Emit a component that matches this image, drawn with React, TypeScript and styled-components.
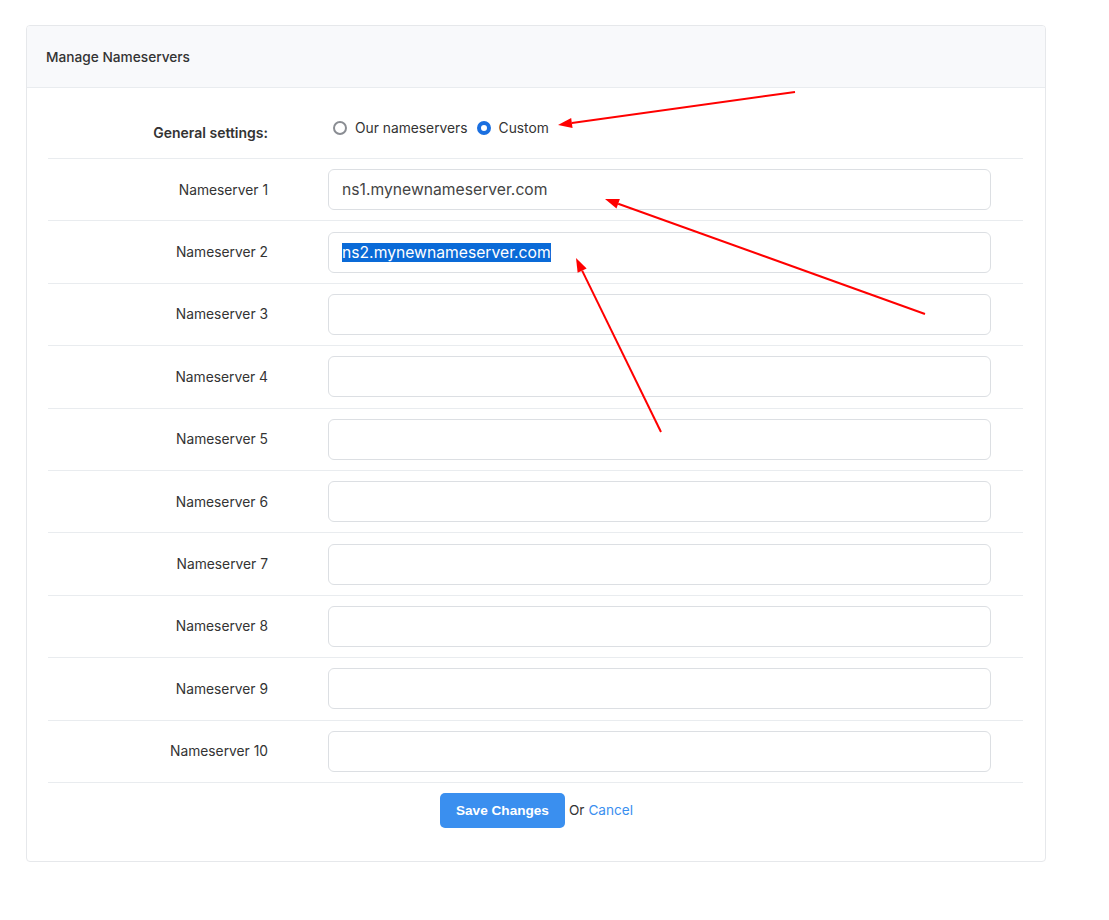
import React from 'react';
import styled, { createGlobalStyle } from 'styled-components';

const GlobalStyle = createGlobalStyle`
  html, body {
    margin: 0;
    background: #fff;
  }
  body {
    font-family: Inter, 'Noto Sans', sans-serif;
    color: #333;
  }
`;

const Page = styled.div`
  position: relative;
  padding: 25px 26px;
  min-height: 920px;
  box-sizing: border-box;
`;

const Card = styled.div`
  width: 1020px;
  border: 1px solid #e6e8eb;
  border-radius: 4px;
  box-sizing: border-box;
  overflow: hidden;
`;

const CardHeader = styled.div`
  height: 61px;
  display: flex;
  align-items: center;
  padding: 0 19px;
  background: #f8f9fb;
  border-bottom: 1px solid #e9ecef;
  font-size: 13.7px;
  font-weight: 500;
  color: #333;
`;

const CardBody = styled.div`
  padding: 0 22px 33px 21px;
`;

const Row = styled.div<{ $first?: boolean }>`
  display: grid;
  grid-template-columns: 220px 663px;
  column-gap: 60px;
  align-items: center;
  height: ${(p) => (p.$first ? '71px' : '62.4px')};
  padding-top: ${(p) => (p.$first ? '18px' : '0')};
  box-sizing: border-box;
  border-bottom: 1px solid #e9ecef;
`;

const Label = styled.label<{ $bold?: boolean }>`
  text-align: right;
  font-size: ${(p) => (p.$bold ? '14px' : '13.8px')};
  font-weight: ${(p) => (p.$bold ? 600 : 400)};
  color: #333;
`;

const RadioGroup = styled.div`
  display: flex;
  align-items: center;
  gap: 9px;
  margin-left: 5px;
  margin-bottom: 8px;
`;

const RadioOption = styled.span`
  display: inline-flex;
  align-items: center;
  gap: 8px;
  font-size: 13.8px;
  color: #333;
`;

const RadioDot = styled.span<{ $checked?: boolean }>`
  width: 14px;
  height: 14px;
  border-radius: 50%;
  box-sizing: border-box;
  border: ${(p) => (p.$checked ? '4px solid #1a6fe0' : '2px solid #8a8d93')};
  background: #fff;
`;

const Input = styled.div`
  height: 41px;
  border: 1px solid #dcdfe3;
  border-radius: 6px;
  box-sizing: border-box;
  display: flex;
  align-items: center;
  padding: 0 13px;
  font-size: 15.7px;
  color: #444;
`;

const Selected = styled.span`
  background: #0a6ad7;
  color: #fff;
`;

const Actions = styled.div`
  display: flex;
  justify-content: center;
  align-items: center;
  gap: 4px;
  margin-top: 10px;
  padding-left: 2px;
  font-size: 13.6px;
  color: #333;
`;

const SaveButton = styled.button`
  height: 35px;
  padding: 0 16px;
  border: none;
  border-radius: 5px;
  background: #3a8fef;
  color: #fff;
  font-family: 'Liberation Sans', Arial, sans-serif;
  font-weight: 700;
  font-size: 13.6px;
`;

const CancelLink = styled.a`
  color: #3a8fef;
  text-decoration: none;
`;

const Arrows = styled.svg`
  position: absolute;
  left: 0;
  top: 0;
  pointer-events: none;
`;

const arrows = [
  { x1: 795, y1: 92, x2: 558, y2: 125 },
  { x1: 925, y1: 314, x2: 605, y2: 199 },
  { x1: 661, y1: 432, x2: 576, y2: 258 },
];

const Arrow: React.FC<{ x1: number; y1: number; x2: number; y2: number }> = ({ x1, y1, x2, y2 }) => {
  const a = Math.atan2(y2 - y1, x2 - x1);
  const len = 14;
  const w = 5;
  const bx = x2 - Math.cos(a) * len;
  const by = y2 - Math.sin(a) * len;
  const px = -Math.sin(a) * w;
  const py = Math.cos(a) * w;
  return (
    <g>
      <line x1={x1} y1={y1} x2={bx} y2={by} stroke="#f00" strokeWidth={2} />
      <polygon points={`${x2},${y2} ${bx + px},${by + py} ${bx - px},${by - py}`} fill="#f00" />
    </g>
  );
};

const values = ['ns1.mynewnameserver.com', 'ns2.mynewnameserver.com'];

export default function App() {
  return (
    <Page>
      <GlobalStyle />
      <Card>
        <CardHeader>Manage Nameservers</CardHeader>
        <CardBody>
          <Row $first>
            <Label $bold>General settings:</Label>
            <RadioGroup>
              <RadioOption>
                <RadioDot />
                Our nameservers
              </RadioOption>
              <RadioOption>
                <RadioDot $checked />
                Custom
              </RadioOption>
            </RadioGroup>
          </Row>
          {Array.from({ length: 10 }, (_, i) => (
            <Row key={i}>
              <Label>Nameserver {i + 1}</Label>
              <Input>
                {i === 0 && values[0]}
                {i === 1 && <Selected>{values[1]}</Selected>}
              </Input>
            </Row>
          ))}
          <Actions>
            <SaveButton>Save Changes</SaveButton>
            Or <CancelLink href="#">Cancel</CancelLink>
          </Actions>
        </CardBody>
      </Card>
      <Arrows width={1109} height={920}>
        {arrows.map((a, i) => (
          <Arrow key={i} {...a} />
        ))}
      </Arrows>
    </Page>
  );
}
